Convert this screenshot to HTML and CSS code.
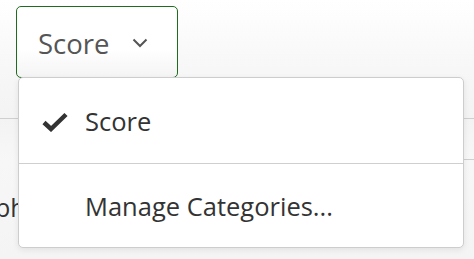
FILE: index.html
```html
<!DOCTYPE html>
<html>
<head>
<meta charset="utf-8">
<link rel="stylesheet" href="styles.css">
</head>
<body>
<div class="page">
  <div class="toolbar">
    <button class="select">
      <span class="select-label">Score</span>
      <svg class="chevron" width="16" height="10" viewBox="0 0 16 10"><path d="M1.5 1.5 L8 8 L14.5 1.5" fill="none" stroke="#555" stroke-width="2"/></svg>
    </button>
  </div>
  <div class="rule"></div>
  <div class="rule-right"></div>
  <div class="behind-text">ph</div>

  <div class="menu">
    <div class="menu-item checked">
      <svg class="check" width="26" height="20" viewBox="0 0 26 20"><path d="M2 10.5 L9 17 L24 2.5" fill="none" stroke="#333" stroke-width="4.5"/></svg>
      <span>Score</span>
    </div>
    <div class="divider"></div>
    <div class="menu-item">
      <span>Manage Categories...</span>
    </div>
  </div>
</div>
</body>
</html>
```
FILE: styles.css
```css
html, body {
  margin: 0;
  padding: 0;
}
body {
  width: 474px;
  height: 259px;
  overflow: hidden;
  background: #f6f6f6;
  font-family: "Open Sans", "Liberation Sans", sans-serif;
}
.page {
  position: relative;
  height: 259px;
  background: linear-gradient(#ffffff 0px, #f8f8f8 60px, #f3f3f3 118px, #f7f7f7 160px, #f4f4f4 259px);
}
.toolbar {
  padding: 6px 0 0 16px;
  height: 112px;
  box-sizing: border-box;
}
.select {
  display: flex;
  align-items: center;
  width: 162px;
  height: 72px;
  box-sizing: border-box;
  border: 1.5px solid #1f6b1f;
  border-radius: 5px;
  background: linear-gradient(#ffffff 60%, #f4f4f4);
  padding: 0 0 0 21px;
  margin: 0;
  font-family: inherit;
  cursor: pointer;
}
.select-label {
  font-size: 27.5px;
  color: #555;
  margin-top: 2px;
}
.chevron {
  margin-left: 23px;
  margin-top: 2px;
}
.rule {
  height: 1px;
  background: #cfcfcf;
  margin-top: 6px;
}
.rule-right {
  height: 1px;
  width: 12px;
  margin-left: auto;
  margin-top: 40px;
  background: #cfcfcf;
}
.behind-text {
  font-size: 25px;
  color: #333;
  margin: 30px 0 0 -5px;
}
.menu {
  position: absolute;
  left: 18px;
  top: 77px;
  width: 446px;
  height: 171px;
  box-sizing: border-box;
  background: #fff;
  border: 1px solid #cdcdcd;
  border-radius: 5px;
  box-shadow: 0 2px 6px rgba(0,0,0,0.08);
  display: flex;
  flex-direction: column;
}
.menu-item {
  display: flex;
  align-items: center;
  padding-left: 66px;
  font-size: 25.5px;
  color: #333;
  flex: 1;
  position: relative;
}
.menu-item.checked {
  flex: 0 0 85px;
}
.check {
  position: absolute;
  left: 23px;
  top: 34px;
}
.divider {
  height: 1px;
  background: #cfcfcf;
}
```
